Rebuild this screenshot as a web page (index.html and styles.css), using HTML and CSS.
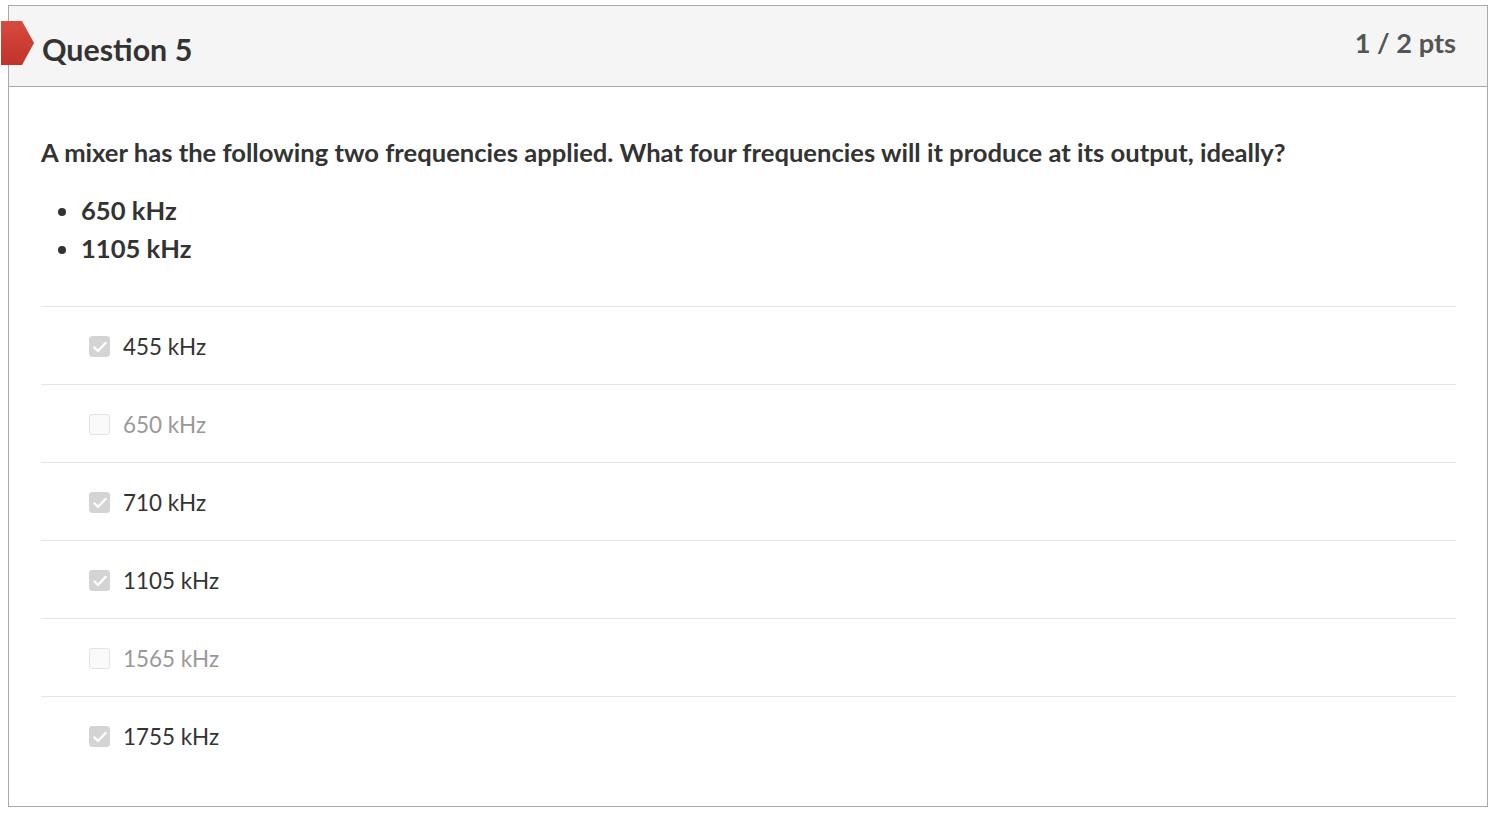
FILE: index.html
```html
<!DOCTYPE html>
<html>
<head>
<meta charset="utf-8">
<link rel="stylesheet" href="styles.css">
</head>
<body>
<div class="question">
  <svg class="flag" width="34" height="44" viewBox="0 0 34 44">
    <defs>
      <linearGradient id="fg" x1="0" y1="0" x2="0" y2="1">
        <stop offset="0" stop-color="#d9493f"/>
        <stop offset="1" stop-color="#bf332a"/>
      </linearGradient>
    </defs>
    <polygon points="0,0 21,0 33,22 21,44 0,44" fill="url(#fg)"/>
  </svg>
  <div class="header">
    <h2 class="name">Question 5</h2>
    <div class="points">1 / 2 pts</div>
  </div>
  <div class="body">
    <p class="text">A mixer has the following two frequencies applied. What four frequencies will it produce at its output, ideally?</p>
    <ul class="freqs">
      <li>650 kHz</li>
      <li>1105 kHz</li>
    </ul>
    <div class="answers">
      <div class="answer selected"><span class="box"><svg width="14" height="12" viewBox="0 0 14 12"><path d="M1.5 6.5 L5 10 L12.5 2" fill="none" stroke="#fff" stroke-width="2.4" stroke-linecap="round" stroke-linejoin="round"/></svg></span><span class="label">455 kHz</span></div>
      <div class="answer"><span class="box"></span><span class="label">650 kHz</span></div>
      <div class="answer selected"><span class="box"><svg width="14" height="12" viewBox="0 0 14 12"><path d="M1.5 6.5 L5 10 L12.5 2" fill="none" stroke="#fff" stroke-width="2.4" stroke-linecap="round" stroke-linejoin="round"/></svg></span><span class="label">710 kHz</span></div>
      <div class="answer selected"><span class="box"><svg width="14" height="12" viewBox="0 0 14 12"><path d="M1.5 6.5 L5 10 L12.5 2" fill="none" stroke="#fff" stroke-width="2.4" stroke-linecap="round" stroke-linejoin="round"/></svg></span><span class="label">1105 kHz</span></div>
      <div class="answer"><span class="box"></span><span class="label">1565 kHz</span></div>
      <div class="answer selected"><span class="box"><svg width="14" height="12" viewBox="0 0 14 12"><path d="M1.5 6.5 L5 10 L12.5 2" fill="none" stroke="#fff" stroke-width="2.4" stroke-linecap="round" stroke-linejoin="round"/></svg></span><span class="label">1755 kHz</span></div>
    </div>
  </div>
</div>
</body>
</html>
```
FILE: styles.css
```css
html, body {
  margin: 0;
  padding: 0;
  background: #fff;
}
body {
  font-family: Lato, "Open Sans", sans-serif;
  color: #333;
  padding: 5px 14px 0 8px;
}
.question {
  position: relative;
  border: 1px solid #aaa;
  width: 1480px;
  box-sizing: border-box;
}
.flag {
  position: absolute;
  left: -8px;
  top: 15px;
}
.header {
  background: #f5f5f5;
  border-bottom: 1px solid #aaa;
  height: 80px;
  display: flex;
  justify-content: space-between;
  align-items: flex-start;
  padding: 0 31px 0 33px;
}
.name {
  margin: 0;
  font-size: 30.4px;
  font-weight: 700;
  line-height: 36px;
  margin-top: 25px;
  color: #333;
}
.points {
  font-size: 27.2px;
  font-weight: 700;
  color: #555;
  line-height: 32px;
  margin-top: 21px;
}
.body {
  padding: 47px 31px 32px 32px;
}
.text {
  margin: 0;
  font-size: 25.6px;
  font-weight: 700;
  line-height: 36px;
}
.freqs {
  margin: 21px 0 0 0;
  padding-left: 40px;
  font-size: 25.6px;
  font-weight: 700;
  line-height: 38px;
}
.answers {
  margin-top: 39px;
}
.answer {
  border-top: 1px solid #e6e6e6;
  height: 77px;
  box-sizing: border-box;
  height: 78px;
  padding-top: 2px;
  display: flex;
  align-items: center;
  padding-left: 48px;
  font-size: 22.4px;
  color: #333;
}
.answer .box {
  width: 21px;
  height: 21px;
  box-sizing: border-box;
  border-radius: 3px;
  border: 1px solid #e3e3e3;
  background: #fafafa;
  margin-right: 13px;
  display: flex;
  align-items: center;
  justify-content: center;
}
.answer.selected .box {
  background: #d4d4d4;
  border-color: #d4d4d4;
}
.answer .label {
  color: #999;
}
.answer.selected .label {
  color: #333;
}
```
